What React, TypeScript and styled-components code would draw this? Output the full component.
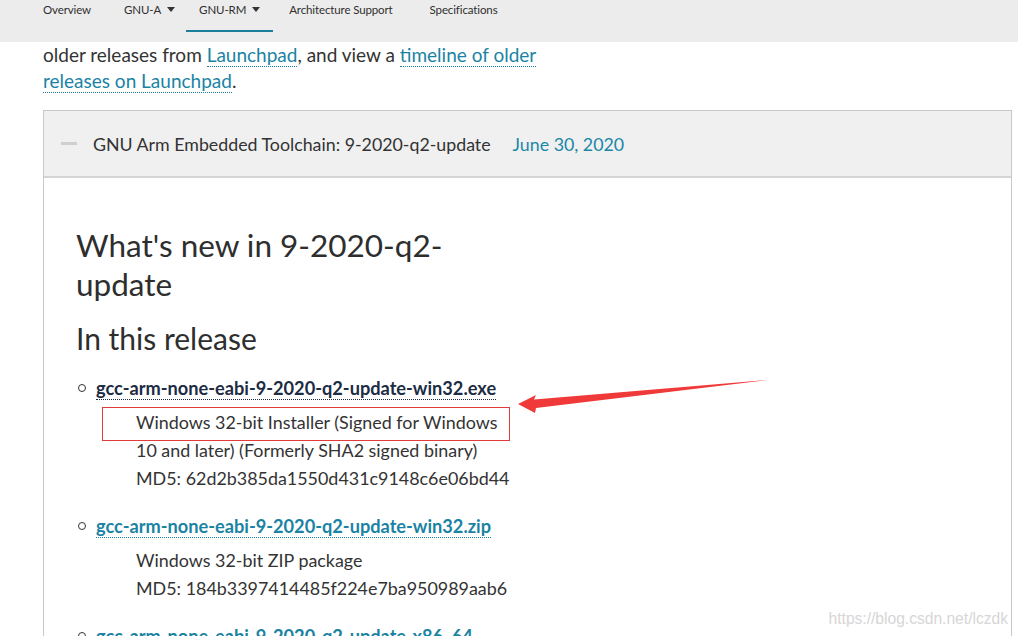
import React from 'react';
import styled, { createGlobalStyle } from 'styled-components';

const GlobalStyle = createGlobalStyle`
  html, body {
    margin: 0;
    padding: 0;
    background: #ffffff;
    font-family: Lato, "Open Sans", sans-serif;
    color: #333333;
  }
`;

const Page = styled.div`
  position: relative;
  width: 1018px;
  height: 636px;
  overflow: hidden;
  background: #ffffff;
`;

const NavBar = styled.nav`
  height: 42px;
  background: #ececec;
  display: flex;
  align-items: flex-start;
  padding-left: 30px;
`;

const NavItem = styled.div<{ $active?: boolean; $ml?: number }>`
  height: 32px;
  box-sizing: border-box;
  padding: 0 13px 11px;
  margin-left: ${p => p.$ml || 0}px;
  display: flex;
  align-items: center;
  gap: 6px;
  font-size: 11.5px;
  letter-spacing: -0.12px;
  color: #2f2f2f;
  border-bottom: 2px solid ${p => (p.$active ? '#1b7e9c' : 'transparent')};
`;

const Caret = () => (
  <svg width="8" height="5" viewBox="0 0 8 5">
    <path d="M0 0h8L4 5z" fill="#333" />
  </svg>
);

const Main = styled.main`
  padding-left: 43px;
`;

const Intro = styled.p`
  margin: 0;
  width: 520px;
  font-size: 19px;
  line-height: 26px;
  color: #333;
`;

const Link = styled.a<{ $visited?: boolean }>`
  color: ${p => (p.$visited ? '#1c2c44' : '#1a83a3')};
  text-decoration: none;
  border-bottom: 1px dotted currentColor;
`;

const Card = styled.section`
  margin-top: 16px;
  width: 969px;
  box-sizing: border-box;
  border: 1px solid #c8c8c8;
  border-bottom: none;
`;

const CardHeader = styled.header`
  height: 65px;
  background: #f0f0f0;
  border-bottom: 2px solid #d4d4d4;
  display: flex;
  align-items: center;
  padding-left: 17px;
  font-size: 17.8px;
  color: #333;
`;

const Dash = styled.span`
  width: 16px;
  height: 3px;
  background: #cfcfcf;
  margin-right: 16px;
`;

const DateText = styled.span`
  margin-left: 22px;
  color: #1a87a8;
`;

const CardBody = styled.div`
  padding: 48px 0 0 32px;
  width: 436px;
`;

const Title = styled.h2`
  margin: 0;
  font-size: 31.5px;
  font-weight: 400;
  line-height: 39px;
  color: #2e2e2e;
`;

const SubTitle = styled.h3`
  margin: 15px 0 0;
  font-size: 30px;
  font-weight: 400;
  line-height: 39px;
  color: #2e2e2e;
`;

const Files = styled.ul`
  list-style: none;
  margin: 16px 0 0;
  padding: 0;
  display: flex;
  flex-direction: column;
  gap: 20px;
`;

const FileItem = styled.li`
  position: relative;
  padding-left: 20px;
  &::before {
    content: '';
    position: absolute;
    left: 2px;
    top: 10px;
    width: 6px;
    height: 6px;
    border: 1px solid #333;
    border-radius: 50%;
  }
`;

const FileLink = styled(Link)`
  font-size: 18.2px;
  font-weight: 700;
  line-height: 28px;
`;

const DescBlock = styled.div`
  margin-top: 6px;
  padding-left: 40px;
  font-size: 17.9px;
  line-height: 28px;
  color: #333;
`;

const Highlight = styled.div`
  position: absolute;
  left: 102px;
  top: 407px;
  width: 408px;
  height: 34px;
  box-sizing: border-box;
  border: 1px solid #e23b3b;
  pointer-events: none;
`;

const Arrow = styled.svg`
  position: absolute;
  left: 0;
  top: 0;
  pointer-events: none;
`;

const Watermark = styled.div`
  position: absolute;
  right: 10px;
  bottom: 8px;
  font-family: "Liberation Sans", Arial, sans-serif;
  font-size: 15.6px;
  color: #d6d6d6;
`;

const files = [
  {
    name: 'gcc-arm-none-eabi-9-2020-q2-update-win32.exe',
    visited: true,
    desc: ['Windows 32-bit Installer (Signed for Windows 10 and later) (Formerly SHA2 signed binary)', 'MD5: 62d2b385da1550d431c9148c6e06bd44'],
  },
  {
    name: 'gcc-arm-none-eabi-9-2020-q2-update-win32.zip',
    visited: false,
    desc: ['Windows 32-bit ZIP package', 'MD5: 184b3397414485f224e7ba950989aab6'],
  },
  {
    name: 'gcc-arm-none-eabi-9-2020-q2-update-x86_64-linux.tar.bz2',
    visited: false,
    desc: ['Linux x86_64 Tarball'],
  },
];

export default function App() {
  return (
    <Page>
      <GlobalStyle />
      <NavBar>
        <NavItem>Overview</NavItem>
        <NavItem $ml={7}>GNU-A <Caret /></NavItem>
        <NavItem $ml={-2} $active>GNU-RM <Caret /></NavItem>
        <NavItem $ml={3}>Architecture Support</NavItem>
        <NavItem $ml={11}>Specifications</NavItem>
      </NavBar>
      <Main>
        <Intro>
          older releases from <Link href="#">Launchpad</Link>, and view a{' '}
          <Link href="#">timeline of older releases on Launchpad</Link>.
        </Intro>
        <Card>
          <CardHeader>
            <Dash />
            GNU Arm Embedded Toolchain: 9-2020-q2-update
            <DateText>June 30, 2020</DateText>
          </CardHeader>
          <CardBody>
            <Title>What's new in 9-2020-q2-update</Title>
            <SubTitle>In this release</SubTitle>
            <Files>
              {files.map(f => (
                <FileItem key={f.name}>
                  <FileLink href="#" $visited={f.visited}>{f.name}</FileLink>
                  <DescBlock>
                    {f.desc.map(d => (
                      <div key={d}>{d}</div>
                    ))}
                  </DescBlock>
                </FileItem>
              ))}
            </Files>
          </CardBody>
        </Card>
      </Main>
      <Highlight />
      <Arrow width="1018" height="636" viewBox="0 0 1018 636">
        <polygon points="518,404 536,395 534,399.5 768,380 536,408 535,413" fill="#f03a3a" />
      </Arrow>
      <Watermark>https://blog.csdn.net/lczdk</Watermark>
    </Page>
  );
}
